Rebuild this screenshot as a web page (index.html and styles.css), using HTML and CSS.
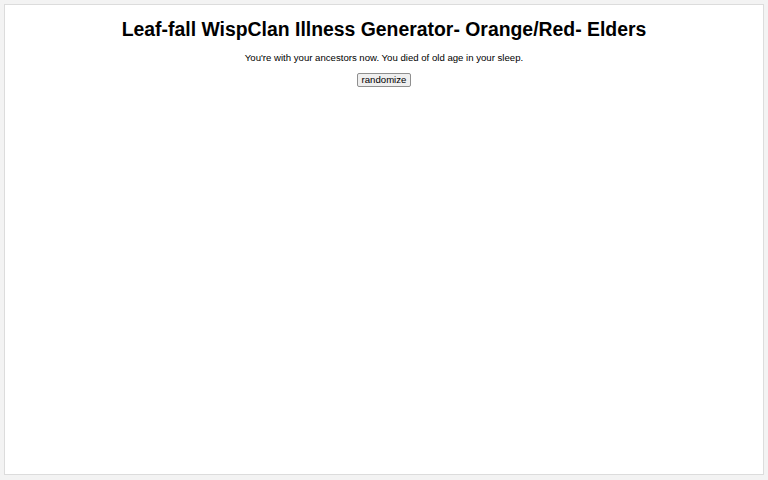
FILE: index.html
```html
<!DOCTYPE html>
<html lang="en">
<head>
<meta charset="UTF-8">
<meta name="viewport" content="width=device-width, initial-scale=1.0">
<title>Leaf-fall WispClan Illness Generator</title>
<link rel="stylesheet" href="styles.css">
</head>
<body>

<div class="page">
  <h1>Leaf-fall WispClan Illness Generator- Orange/Red- Elders</h1>
  <p class="result" id="result">You're with your ancestors now. You died of old age in your sleep.</p>
  <button class="randomize-btn" onclick="randomize()">randomize</button>
</div>

<script>
  const results = [
    "You're with your ancestors now. You died of old age in your sleep.",
    "You caught a chill in the cold leaf-fall winds. Rest in the elders' den.",
    "Your joints ache from the damp weather. Ask the medicine cat for poppy seeds.",
    "You have a bad cough. Stay away from the nursery until it passes."
  ];

  function randomize() {
    const pick = results[Math.floor(Math.random() * results.length)];
    document.getElementById('result').textContent = pick;
  }
</script>
</body>
</html>
```

FILE: styles.css
```css
html, body {
  height: 100%;
}
body {
  margin: 0;
  padding: 4px 4px 5px 4px;
  box-sizing: border-box;
  background-color: #f3f3f3;
  font-family: "Liberation Sans", Arial, sans-serif;
  color: #000;
}
.page {
  height: 100%;
  box-sizing: border-box;
  background-color: #fff;
  border: 1px solid #dcdcdc;
  text-align: center;
  padding-top: 13px;
}
h1 {
  font-size: 19.4px;
  margin: 0 0 11px 0;
}
.result {
  font-size: 9.6px;
  margin: 0 0 6px 0;
}
.randomize-btn {
  font-family: "Liberation Sans", Arial, sans-serif;
  font-size: 9.6px;
  padding: 0 4px;
  height: 14px;
  background-color: #efefef;
  border: 1px solid #8f8f8f;
  border-radius: 2px;
  color: #000;
}
```
